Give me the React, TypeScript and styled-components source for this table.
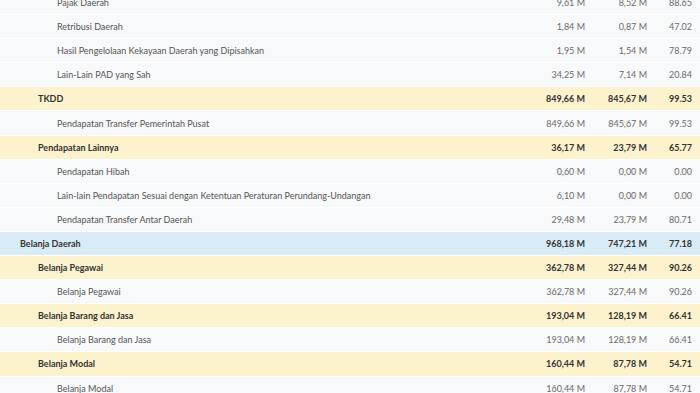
import { createGlobalStyle, styled } from "styled-components";

const GlobalStyle = createGlobalStyle`
	html, body {
		margin: 0;
		padding: 0;
		background: #ffffff;
		overflow: hidden;
	}
	body {
		font-family: Lato, "Open Sans", sans-serif;
	}
`;

type Level = 0 | 1 | 2;

type Item = {
	label: string;
	pagu: string;
	real: string;
	pct: string;
	level: Level;
};

const rows: Item[] = [
	{ label: "Pajak Daerah", pagu: "9,61 M", real: "8,52 M", pct: "88.65", level: 2 },
	{ label: "Retribusi Daerah", pagu: "1,84 M", real: "0,87 M", pct: "47.02", level: 2 },
	{ label: "Hasil Pengelolaan Kekayaan Daerah yang Dipisahkan", pagu: "1,95 M", real: "1,54 M", pct: "78.79", level: 2 },
	{ label: "Lain-Lain PAD yang Sah", pagu: "34,25 M", real: "7,14 M", pct: "20.84", level: 2 },
	{ label: "TKDD", pagu: "849,66 M", real: "845,67 M", pct: "99.53", level: 1 },
	{ label: "Pendapatan Transfer Pemerintah Pusat", pagu: "849,66 M", real: "845,67 M", pct: "99.53", level: 2 },
	{ label: "Pendapatan Lainnya", pagu: "36,17 M", real: "23,79 M", pct: "65.77", level: 1 },
	{ label: "Pendapatan Hibah", pagu: "0,60 M", real: "0,00 M", pct: "0.00", level: 2 },
	{ label: "Lain-lain Pendapatan Sesuai dengan Ketentuan Peraturan Perundang-Undangan", pagu: "6,10 M", real: "0,00 M", pct: "0.00", level: 2 },
	{ label: "Pendapatan Transfer Antar Daerah", pagu: "29,48 M", real: "23,79 M", pct: "80.71", level: 2 },
	{ label: "Belanja Daerah", pagu: "968,18 M", real: "747,21 M", pct: "77.18", level: 0 },
	{ label: "Belanja Pegawai", pagu: "362,78 M", real: "327,44 M", pct: "90.26", level: 1 },
	{ label: "Belanja Pegawai", pagu: "362,78 M", real: "327,44 M", pct: "90.26", level: 2 },
	{ label: "Belanja Barang dan Jasa", pagu: "193,04 M", real: "128,19 M", pct: "66.41", level: 1 },
	{ label: "Belanja Barang dan Jasa", pagu: "193,04 M", real: "128,19 M", pct: "66.41", level: 2 },
	{ label: "Belanja Modal", pagu: "160,44 M", real: "87,78 M", pct: "54.71", level: 1 },
	{ label: "Belanja Modal", pagu: "160,44 M", real: "87,78 M", pct: "54.71", level: 2 },
];

const rowBg: Record<Level, string> = {
	0: "#d9ecf6",
	1: "#fcf2cd",
	2: "#f8f9fa",
};

const indent: Record<Level, number> = {
	0: 20,
	1: 38,
	2: 57,
};

// page is scrolled: first row sits partly above the viewport
const Table = styled.div`
	display: flex;
	flex-direction: column;
	margin-top: -9px;
`;

const Row = styled.div<{ $level: Level }>`
	display: grid;
	grid-template-columns: 1fr 70px 62px 45px;
	align-items: center;
	height: 23.1px;
	border-bottom: 1px solid #ffffff;
	background: ${({ $level }) => rowBg[$level]};
	font-size: 9px;
	font-weight: ${({ $level }) => ($level === 2 ? 400 : 700)};
	color: ${({ $level }) => ($level === 2 ? "#555555" : "#333333")};
`;

const Label = styled.div<{ $level: Level }>`
	padding-left: ${({ $level }) => indent[$level]}px;
	white-space: nowrap;
	overflow: hidden;
`;

const Num = styled.div<{ $level: Level }>`
	text-align: right;
	padding-right: 8px;
	white-space: nowrap;
	color: ${({ $level }) => ($level === 2 ? "#6a6a6a" : "#333333")};
`;

export default function App() {
	return (
		<>
			<GlobalStyle />
			<Table>
				{rows.map((r, i) => (
					<Row key={i} $level={r.level}>
						<Label $level={r.level}>{r.label}</Label>
						<Num $level={r.level}>{r.pagu}</Num>
						<Num $level={r.level}>{r.real}</Num>
						<Num $level={r.level}>{r.pct}</Num>
					</Row>
				))}
			</Table>
		</>
	);
}
